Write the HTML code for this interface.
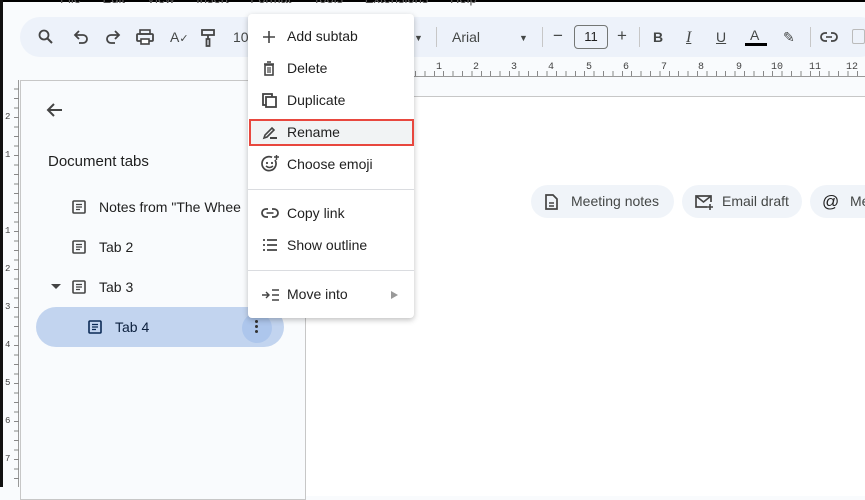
<!DOCTYPE html>
<html><head><style>
*{box-sizing:border-box;margin:0;padding:0}
body{width:865px;height:487px;overflow:hidden;background:#f9fbfd;font-family:"Liberation Sans",Arial,sans-serif;color:#1f1f1f;position:relative}
.abs{position:absolute}
.tb{left:20px;top:17px;width:860px;height:40px;background:#edf2fa;border-radius:20px}
.t{position:absolute;font-size:14px;color:#444746;top:29px}
.side{left:20px;top:80px;width:286px;height:420px;background:#f9fbfd;border:1px solid #c7c7c7}
.doc{left:305px;top:96px;width:560px;height:400px;background:#fff;border-top:1px solid #c7c7c7}
.item{position:absolute;font-size:14px;color:#1f1f1f}
.menu{left:248px;top:14px;width:166px;height:304px;background:#fff;border-radius:4px;box-shadow:0 2px 6px rgba(0,0,0,.25)}
.mi{position:absolute;left:39px;font-size:14px;color:#1f1f1f}
.sep{position:absolute;left:0;width:166px;height:1px;background:#dadce0}
.chip{position:absolute;top:185px;height:33px;background:#f0f4f9;border-radius:17px;font-size:14px;color:#444746;line-height:33px}
</style></head><body>
<div class="abs" style="left:0;top:0;width:865px;height:2px;background:#000"></div>
<div class="abs" style="left:60px;top:-9px;font-size:13px;color:#555;word-spacing:18px">File Edit View Insert Format Tools Extensions Help</div>
<div class="abs" style="left:0;top:0;width:3px;height:487px;background:#111"></div>
<div class="abs tb"></div>
<svg class="abs" style="left:38px;top:29px" width="16" height="16" viewBox="0 0 16 16"><circle cx="6" cy="6" r="4.5" fill="none" stroke="#444" stroke-width="1.8"/><path d="M9.5 9.5L14 14" stroke="#444" stroke-width="2"/></svg>
<svg class="abs" style="left:73px;top:30px" width="16" height="14"><path d="M3 5h7a4 4 0 010 8H6" fill="none" stroke="#444" stroke-width="1.8"/><path d="M6 1L2 5l4 4" fill="none" stroke="#444" stroke-width="1.8"/></svg>
<svg class="abs" style="left:105px;top:30px" width="16" height="14"><path d="M13 5H6a4 4 0 000 8h4" fill="none" stroke="#444" stroke-width="1.8"/><path d="M10 1l4 4-4 4" fill="none" stroke="#444" stroke-width="1.8"/></svg>
<svg class="abs" style="left:136px;top:29px" width="18" height="16"><rect x="4" y="1" width="10" height="4" fill="none" stroke="#444" stroke-width="1.6"/><rect x="1" y="5" width="16" height="7" rx="1" fill="none" stroke="#444" stroke-width="1.8"/><rect x="5" y="10" width="8" height="5" fill="#fff" stroke="#444" stroke-width="1.6"/></svg>
<div class="t" style="left:170px">A<span style="font-size:11px">✓</span></div>
<svg class="abs" style="left:201px;top:29px" width="14" height="18"><rect x="1" y="1" width="12" height="5" fill="none" stroke="#444" stroke-width="1.8"/><path d="M7 6v4M5.5 10h3v7h-3z" fill="none" stroke="#444" stroke-width="1.8"/></svg>
<div class="t" style="left:233px">10</div>
<div class="t" style="left:414px;font-size:9px;top:33px">▼</div>
<div class="abs" style="left:436px;top:27px;width:1px;height:20px;background:#c7c7c7"></div>
<div class="t" style="left:452px">Arial</div>
<div class="t" style="left:519px;font-size:9px;top:33px">▼</div>
<div class="abs" style="left:542px;top:27px;width:1px;height:20px;background:#c7c7c7"></div>
<div class="t" style="left:553px;font-size:17px;top:26px">−</div>
<div class="abs" style="left:574px;top:25px;width:34px;height:24px;border:1px solid #747775;border-radius:4px;font-size:13px;text-align:center;line-height:22px;color:#1f1f1f">11</div>
<div class="t" style="left:617px;font-size:17px;top:26px">+</div>
<div class="abs" style="left:639px;top:27px;width:1px;height:20px;background:#c7c7c7"></div>
<div class="t" style="left:653px;font-weight:bold">B</div>
<div class="t" style="left:686px;font-style:italic;font-family:'Liberation Serif';font-size:16px;text-decoration:underline">I</div>
<div class="t" style="left:716px;text-decoration:underline">U</div>
<div class="t" style="left:750px;top:27px">A</div>
<div class="abs" style="left:745px;top:43px;width:22px;height:3px;background:#000"></div>
<div class="t" style="left:783px">✎</div>
<div class="abs" style="left:810px;top:27px;width:1px;height:20px;background:#c7c7c7"></div>
<svg class="abs" style="left:820px;top:31px" width="18" height="12"><rect x="1" y="2" width="16" height="8" rx="4" fill="none" stroke="#444" stroke-width="1.8"/><rect x="7" y="0" width="4" height="3" fill="#edf2fa"/><rect x="7" y="9" width="4" height="3" fill="#edf2fa"/><path d="M6 6h6" stroke="#444" stroke-width="1.6"/></svg>
<div class="abs" style="left:852px;top:29px;width:13px;height:15px;border:1.5px solid #bbb;border-radius:2px"></div>
<!-- top ruler -->
<div class="abs" style="left:305px;top:58px;width:560px;height:22px;font-family:'Liberation Mono',monospace;font-size:10px;color:#444">
<div class="abs" style="left:0;top:18px;width:560px;height:1px;background:#999"></div>
<span class="abs" style="left:131px;top:4px">1</span><span class="abs" style="left:168px;top:4px">2</span><span class="abs" style="left:206px;top:4px">3</span><span class="abs" style="left:243px;top:4px">4</span><span class="abs" style="left:281px;top:4px">5</span><span class="abs" style="left:318px;top:4px">6</span><span class="abs" style="left:356px;top:4px">7</span><span class="abs" style="left:393px;top:4px">8</span><span class="abs" style="left:431px;top:4px">9</span><span class="abs" style="left:466px;top:4px">10</span><span class="abs" style="left:504px;top:4px">11</span><span class="abs" style="left:541px;top:4px">12</span>
<div class="abs" style="left:110px;top:13px;width:450px;height:5px;background:repeating-linear-gradient(90deg,#888 0 1px,transparent 1px 9.4px)"></div>
</div>
<div class="abs doc"></div>
<div class="abs side"></div>
<!-- left ruler -->
<div class="abs" style="left:3px;top:80px;width:16px;height:407px;background:#f9fbfd;border-right:1px solid #999"></div>
<div class="abs" style="left:14px;top:80px;width:5px;height:407px;background:repeating-linear-gradient(180deg,transparent 0 8.5px,#888 8.5px 9.5px)"></div>
<div class="abs" style="left:5px;top:98px;font-size:9px;color:#444;line-height:38px;font-family:'Liberation Mono'"><div>2</div><div>1</div><div>&nbsp;</div><div>1</div><div>2</div><div>3</div><div>4</div><div>5</div><div>6</div><div>7</div></div>
<!-- sidebar -->
<svg class="abs" style="left:45px;top:102px" width="18" height="16"><path d="M17 8H3M9 2L3 8l6 6" fill="none" stroke="#444" stroke-width="2"/></svg>
<div class="item" style="left:48px;top:153px;font-size:15px">Document tabs</div>
<svg width="0" height="0" style="position:absolute"><defs><g id="doc"><rect x="1" y="1" width="12" height="12" rx="1" fill="none" stroke="currentColor" stroke-width="1.6"/><path d="M4 4.5h6M4 7h6M4 9.5h4" stroke="currentColor" stroke-width="1.3"/></g></defs></svg>
<svg class="abs" style="left:72px;top:200px;color:#444" width="14" height="14"><use href="#doc"/></svg>
<div class="item" style="left:99px;top:199px">Notes from "The Whee</div>
<svg class="abs" style="left:72px;top:240px;color:#444" width="14" height="14"><use href="#doc"/></svg>
<div class="item" style="left:99px;top:239px">Tab 2</div>
<div class="abs" style="left:51px;top:284px;width:0;height:0;border-left:5px solid transparent;border-right:5px solid transparent;border-top:5px solid #444"></div>
<svg class="abs" style="left:72px;top:280px;color:#444" width="14" height="14"><use href="#doc"/></svg>
<div class="item" style="left:99px;top:279px">Tab 3</div>
<div class="abs" style="left:36px;top:307px;width:248px;height:40px;background:#c2d4ef;border-radius:20px"></div>
<div class="abs" style="left:242px;top:313px;width:30px;height:30px;background:#adc6ec;border-radius:50%"></div>
<div class="abs" style="left:255px;top:320px;width:3px;height:3px;background:#333;border-radius:50%;box-shadow:0 5px #333,0 10px #333"></div>
<svg class="abs" style="left:88px;top:320px;color:#0b2a55" width="14" height="14"><use href="#doc"/></svg>
<div class="item" style="left:115px;top:319px;color:#0b1f3d">Tab 4</div>
<!-- chips -->
<div class="chip" style="left:531px;width:143px"><svg class="abs" style="left:14px;top:9px" width="13" height="16"><path d="M1 1h7l4 4v10H1z" fill="none" stroke="#444" stroke-width="1.7"/><path d="M4 9h5M4 12h5" stroke="#444" stroke-width="1.4"/></svg><span style="position:absolute;left:40px">Meeting notes</span></div>
<div class="chip" style="left:682px;width:120px"><svg class="abs" style="left:13px;top:10px" width="18" height="15"><path d="M12 12H1V1h15v6" fill="none" stroke="#444" stroke-width="1.7"/><path d="M1 1l7.5 6L16 1" fill="none" stroke="#444" stroke-width="1.6"/><path d="M15 9v6M12 12h6" stroke="#444" stroke-width="1.6"/></svg><span style="position:absolute;left:40px">Email draft</span></div>
<div class="chip" style="left:810px;width:80px"><span style="position:absolute;left:12px;top:0;font-size:17px;color:#222">@</span><span style="position:absolute;left:40px">Me</span></div>
<!-- menu -->
<div class="abs menu">
<svg class="abs" style="left:15px;top:17px" width="12" height="12"><path d="M6 0v12M0 6h12" stroke="#444" stroke-width="1.6"/></svg><div class="mi" style="top:14px">Add subtab</div>
<svg class="abs" style="left:15px;top:47px" width="12" height="15"><path d="M1 3h10M4 1h4" stroke="#444" stroke-width="1.6"/><rect x="2" y="4" width="8" height="10" fill="none" stroke="#444" stroke-width="1.6"/><path d="M5 6v6M7 6v6" stroke="#444" stroke-width="1.2"/></svg>
<div class="mi" style="top:46px">Delete</div>
<svg class="abs" style="left:14px;top:79px" width="15" height="15"><rect x="1" y="1" width="9" height="11" fill="none" stroke="#444" stroke-width="1.8"/><rect x="4" y="4" width="10" height="10" fill="#fff" stroke="#444" stroke-width="1.8"/></svg>
<div class="mi" style="top:78px">Duplicate</div>
<div class="abs" style="left:1px;top:105px;width:165px;height:27px;background:#f1f3f4;border:2px solid #e8473e"></div>
<svg class="abs" style="left:14px;top:112px" width="16" height="14"><path d="M2 12l1-3 7-7 2 2-7 7z" fill="none" stroke="#444" stroke-width="1.6"/><path d="M8 12h7" stroke="#444" stroke-width="2"/></svg>
<div class="mi" style="top:110px">Rename</div>
<svg class="abs" style="left:13px;top:141px" width="18" height="18"><path d="M13 2h5M15.5 0v5" stroke="#444" stroke-width="1.4"/><path d="M14 5A7 7 0 1 1 11 2.3" fill="none" stroke="#444" stroke-width="1.7"/><circle cx="6" cy="8" r="1.1" fill="#444"/><circle cx="11" cy="8" r="1.1" fill="#444"/><path d="M5 11q3.5 3 7 0" fill="none" stroke="#444" stroke-width="1.5"/></svg>
<div class="mi" style="top:142px">Choose emoji</div>
<div class="sep" style="top:175px"></div>
<svg class="abs" style="left:13px;top:194px" width="18" height="10"><rect x="1" y="1" width="16" height="8" rx="4" fill="none" stroke="#444" stroke-width="1.8"/><rect x="7" y="0" width="4" height="10" fill="#fff"/><path d="M5.5 5h7" stroke="#444" stroke-width="1.6"/></svg>
<div class="mi" style="top:191px">Copy link</div>
<svg class="abs" style="left:14px;top:224px" width="15" height="14"><path d="M1 2h2M1 7h2M1 12h2M5 2h10M5 7h10M5 12h10" stroke="#444" stroke-width="1.8"/></svg>
<div class="mi" style="top:223px">Show outline</div>
<div class="sep" style="top:256px"></div>
<svg class="abs" style="left:14px;top:275px" width="18" height="12"><path d="M0 6h7M4 3l3 3-3 3" fill="none" stroke="#444" stroke-width="1.4"/><path d="M10 1h7M10 6h7M10 11h7" stroke="#444" stroke-width="1.4"/></svg>
<div class="mi" style="top:272px">Move into</div>
<div class="abs" style="left:143px;top:277px;width:0;height:0;border-top:4px solid transparent;border-bottom:4px solid transparent;border-left:7px solid #999"></div>
</div>
</body></html>
